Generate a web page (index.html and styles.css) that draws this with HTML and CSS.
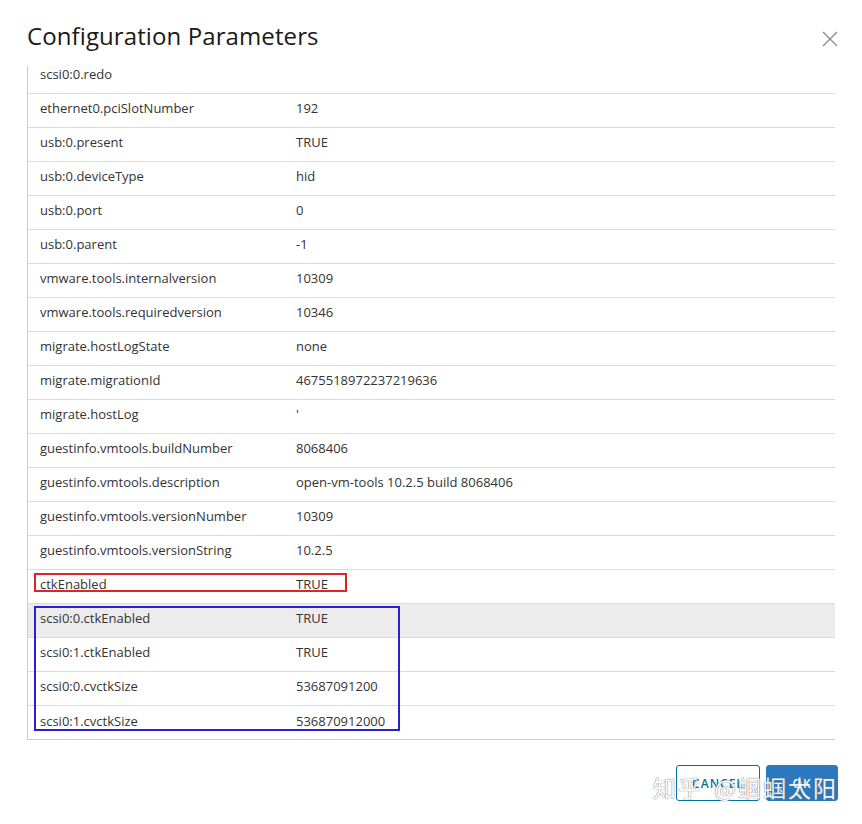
FILE: index.html
```html
<!DOCTYPE html>
<html lang="en">
<head>
  <meta charset="UTF-8">
  <title>Configuration Parameters</title>
  <link rel="stylesheet" href="styles.css">
</head>
<body>

  <div class="modal">
    <div class="modal-header">
      <h2>Configuration Parameters</h2>
      <span class="close">
        <svg width="16" height="16" viewBox="0 0 16 16"><path d="M1 1 L15 15 M15 1 L1 15" stroke="#8a8a8a" stroke-width="1.3" fill="none"/></svg>
      </span>
    </div>

    <div class="grid-wrap">
      <div class="grid">
        <div class="row"><span class="key">scsi0:0.redo</span><span class="val"></span></div>
        <div class="row"><span class="key">ethernet0.pciSlotNumber</span><span class="val">192</span></div>
        <div class="row"><span class="key">usb:0.present</span><span class="val">TRUE</span></div>
        <div class="row"><span class="key">usb:0.deviceType</span><span class="val">hid</span></div>
        <div class="row"><span class="key">usb:0.port</span><span class="val">0</span></div>
        <div class="row"><span class="key">usb:0.parent</span><span class="val">-1</span></div>
        <div class="row"><span class="key">vmware.tools.internalversion</span><span class="val">10309</span></div>
        <div class="row"><span class="key">vmware.tools.requiredversion</span><span class="val">10346</span></div>
        <div class="row"><span class="key">migrate.hostLogState</span><span class="val">none</span></div>
        <div class="row"><span class="key">migrate.migrationId</span><span class="val">4675518972237219636</span></div>
        <div class="row"><span class="key">migrate.hostLog</span><span class="val">'</span></div>
        <div class="row"><span class="key">guestinfo.vmtools.buildNumber</span><span class="val">8068406</span></div>
        <div class="row"><span class="key">guestinfo.vmtools.description</span><span class="val">open-vm-tools 10.2.5 build 8068406</span></div>
        <div class="row"><span class="key">guestinfo.vmtools.versionNumber</span><span class="val">10309</span></div>
        <div class="row"><span class="key">guestinfo.vmtools.versionString</span><span class="val">10.2.5</span></div>
        <div class="row"><span class="key">ctkEnabled</span><span class="val">TRUE</span></div>
        <div class="row selected"><span class="key">scsi0:0.ctkEnabled</span><span class="val">TRUE</span></div>
        <div class="row"><span class="key">scsi0:1.ctkEnabled</span><span class="val">TRUE</span></div>
        <div class="row"><span class="key">scsi0:0.cvctkSize</span><span class="val">53687091200</span></div>
        <div class="row"><span class="key">scsi0:1.cvctkSize</span><span class="val">536870912000</span></div>
      </div>
      <div class="mark red"></div>
      <div class="mark blue"></div>
    </div>

    <div class="modal-footer">
      <button class="btn btn-outline">CANCEL</button>
      <button class="btn btn-primary">OK</button>
      <span class="watermark">知乎 @蝈蝈太阳</span>
    </div>
  </div>

</body>
</html>
```

FILE: styles.css
```css
body {
  margin: 0;
  background: #fff;
  font-family: "Open Sans", Arial, sans-serif;
  color: #333;
}

.modal {
  width: 862px;
  height: 824px;
  position: relative;
}

.modal-header {
  display: flex;
  justify-content: space-between;
  align-items: center;
  padding: 18px 24px 0 27px;
  height: 34px;
}

.modal-header h2 {
  margin: 0;
  font-weight: 400;
  font-size: 24px;
  color: #1a1a1a;
  letter-spacing: 0.1px;
}

.close {
  display: flex;
  margin-top: 8px;
}

.grid-wrap {
  position: relative;
  margin: 14px 27px 0 27px;
  height: 673px;
  overflow: hidden;
  border-left: 1px solid #ccc;
  border-bottom: 1px solid #ccc;
}

.grid {
  margin-top: -6px;
}

.row {
  display: flex;
  align-items: center;
  box-sizing: border-box;
  height: 34px;
  padding-bottom: 5px;
  border-bottom: 1px solid #dcdcdc;
  font-size: 13px;
}

.row:last-child {
  border-bottom: none;
}

.row.selected {
  background: #ececec;
}

.key {
  width: 256px;
  padding-left: 12px;
}

.val {
  flex: 1;
}

.mark {
  position: absolute;
  border: 2px solid;
}

.mark.red {
  border-color: #e0232b;
  left: 6px;
  top: 507px;
  width: 309px;
  height: 15px;
}

.mark.blue {
  border-color: #2a1fd6;
  left: 6px;
  top: 540px;
  width: 362px;
  height: 121px;
}

.modal-footer {
  position: relative;
  display: flex;
  justify-content: flex-end;
  gap: 6px;
  padding: 25px 24px 0 0;
}

.btn {
  height: 36px;
  padding: 0 12px;
  font-family: "Open Sans", Arial, sans-serif;
  font-size: 12px;
  font-weight: 600;
  letter-spacing: 1px;
  border-radius: 3px;
}

.btn-outline {
  width: 84px;
  background: #fff;
  color: #0072a3;
  border: 1px solid #0072a3;
}

.btn-primary {
  width: 72px;
  background: #2b78bf;
  color: #fff;
  border: 1px solid #2b78bf;
}

.watermark {
  position: absolute;
  right: 24px;
  top: 30px;
  font-family: "Noto Sans CJK SC", sans-serif;
  font-size: 23px;
  letter-spacing: 2px;
  word-spacing: 4px;
  color: #fff;
  text-shadow: 0 0 1px #777, 0 0 1px #777;
  opacity: 0.92;
}
```
